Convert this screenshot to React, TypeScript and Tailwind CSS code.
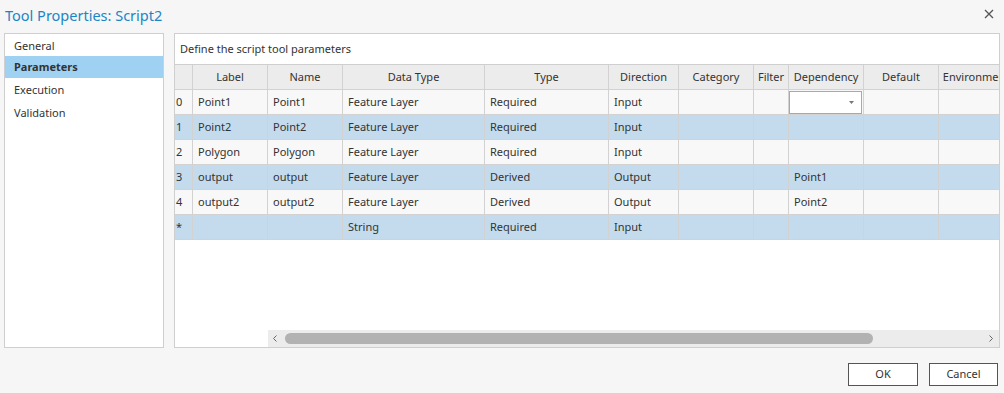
import React from "react";

const cols = [
  { name: "Label", w: "w-[75px]" },
  { name: "Name", w: "w-[75px]" },
  { name: "Data Type", w: "w-[142px]" },
  { name: "Type", w: "w-[124px]" },
  { name: "Direction", w: "w-[70px]" },
  { name: "Category", w: "w-[75px]" },
  { name: "Filter", w: "w-[35px]" },
  { name: "Dependency", w: "w-[75px]" },
  { name: "Default", w: "w-[75px]" },
  { name: "Environment", w: "w-[75px]" },
];

const rows: { h: string; sel: boolean; v: string[] }[] = [
  { h: "0", sel: false, v: ["Point1", "Point1", "Feature Layer", "Required", "Input", "", "", "__dd", "", ""] },
  { h: "1", sel: true, v: ["Point2", "Point2", "Feature Layer", "Required", "Input", "", "", "", "", ""] },
  { h: "2", sel: false, v: ["Polygon", "Polygon", "Feature Layer", "Required", "Input", "", "", "", "", ""] },
  { h: "3", sel: true, v: ["output", "output", "Feature Layer", "Derived", "Output", "", "", "Point1", "", ""] },
  { h: "4", sel: false, v: ["output2", "output2", "Feature Layer", "Derived", "Output", "", "", "Point2", "", ""] },
  { h: "*", sel: true, v: ["", "", "String", "Required", "Input", "", "", "", "", ""] },
];

export default function App() {
  return (
    <div
      className="w-[1004px] h-[393px] bg-[#f5f6f5] text-[#333] flex flex-col overflow-hidden"
      style={{ fontFamily: '"Noto Sans", "Open Sans", sans-serif' }}
    >
      <div className="h-[33px] flex items-center justify-between pl-[5px] pr-[10px]">
        <span className="text-[14.5px] text-[#1a86c8] leading-none -mt-[3px]">Tool Properties: Script2</span>
        <svg width="10" height="10" viewBox="0 0 10 10" className="-mt-[6px]">
          <path d="M1 1L9 9M9 1L1 9" stroke="#555" strokeWidth="1.3" />
        </svg>
      </div>
      <div className="flex h-[315px] pl-[4px] pr-[4px] gap-[10px]">
        <div className="w-[160px] h-full bg-white border border-[#cfcfcf] pt-[1px] text-[11px]">
          <div className="h-[21px] flex items-center pl-[9px] pt-[1px]">General</div>
          <div className="h-[22px] flex items-center pl-[9px] pt-[1px] bg-[#9fd2f2] font-bold">Parameters</div>
          <div className="h-[23px] flex items-center pl-[9px] pt-[1px]">Execution</div>
          <div className="h-[23px] flex items-center pl-[9px] pt-[1px]">Validation</div>
        </div>
        <div className="w-[826px] h-full bg-white border border-[#cfcfcf] flex flex-col text-[11px]">
          <div className="h-[31px] border-b border-[#cfcfcf] flex items-center pl-[5px] pt-[1px]">Define the script tool parameters</div>
          <div className="flex-1 overflow-hidden">
            <div className="flex h-[25px] bg-[#ececec] border-b border-[#d2d2d2]">
              <div className="w-[18px] shrink-0 border-r border-[#d2d2d2]" />
              {cols.map((c) => (
                <div
                  key={c.name}
                  className={`${c.w} shrink-0 border-r border-[#d2d2d2] flex items-center justify-center pt-[1px] whitespace-nowrap overflow-hidden`}
                >
                  {c.name}
                </div>
              ))}
            </div>
            {rows.map((r) => (
              <div
                key={r.h}
                className={`flex h-[25px] border-b border-[#d2d2d2] ${r.sel ? "bg-[#c4dbee]" : "bg-[#f8f8f8]"}`}
              >
                <div className="w-[18px] shrink-0 border-r border-[#d2d2d2] flex items-center pl-[1px] pt-[1px]">{r.h}</div>
                {r.v.map((v, i) => (
                  <div
                    key={i}
                    className={`${cols[i].w} shrink-0 border-r border-[#d2d2d2] flex items-center pl-[5px] pt-[1px] whitespace-nowrap overflow-hidden`}
                  >
                    {v === "__dd" ? (
                      <div className="w-[73px] h-[23px] -ml-[5px] -mt-[1px] bg-white border border-[#a8a8a8] flex items-center justify-end pr-[7px]">
                        <svg width="5" height="3" viewBox="0 0 5 3">
                          <path d="M0 0H5L2.5 3Z" fill="#777" />
                        </svg>
                      </div>
                    ) : (
                      v
                    )}
                  </div>
                ))}
              </div>
            ))}
          </div>
          <div className="h-[17px] ml-[93px] bg-[#ececec] flex items-center">
            <svg width="14" height="17" viewBox="0 0 14 17" className="shrink-0">
              <path d="M8.5 5.5L5.5 8.5L8.5 11.5" stroke="#666" strokeWidth="1" fill="none" />
            </svg>
            <div className="w-[588px] h-[11px] rounded-full bg-[#b2b2b2] ml-[3px]" />
            <div className="flex-1" />
            <svg width="14" height="17" viewBox="0 0 14 17" className="shrink-0 mr-[1px]">
              <path d="M5.5 5.5L8.5 8.5L5.5 11.5" stroke="#666" strokeWidth="1" fill="none" />
            </svg>
          </div>
        </div>
      </div>
      <div className="flex justify-end gap-[11px] pr-[6px] pt-[15px] text-[11px]">
        <button className="w-[70px] h-[23px] bg-white border border-[#555] flex items-center justify-center">OK</button>
        <button className="w-[69px] h-[23px] bg-white border border-[#555] flex items-center justify-center">Cancel</button>
      </div>
    </div>
  );
}
